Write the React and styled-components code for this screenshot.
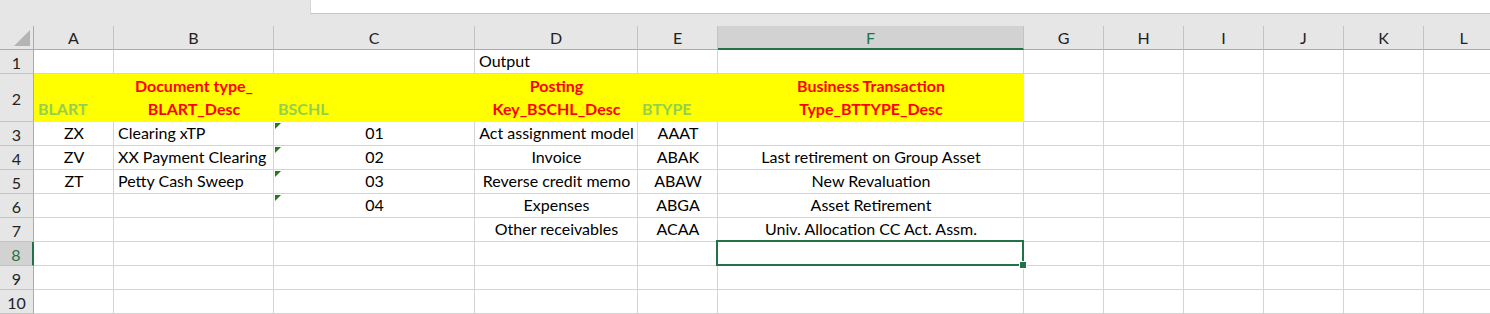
import React from "react";
import styled, { createGlobalStyle, css } from "styled-components";

//*********************************************************
// Data
//*********************************************************
const COLUMNS = [
	{ key: "A", width: 80 },
	{ key: "B", width: 160 },
	{ key: "C", width: 201 },
	{ key: "D", width: 163 },
	{ key: "E", width: 80 },
	{ key: "F", width: 306 },
	{ key: "G", width: 80 },
	{ key: "H", width: 80 },
	{ key: "I", width: 80 },
	{ key: "J", width: 80 },
	{ key: "K", width: 80 },
	{ key: "L", width: 80 }
];

const GREEN_LABEL = "#92d050";
const RED = "#ff0000";

const c = (text, opts = {}) => ({ text, ...opts });

const ROWS = [
	{ n: 1, cells: { D: c("Output", { align: "left" }) } },
	{
		n: 2,
		tall: true,
		fill: ["A", "B", "C", "D", "E", "F"],
		cells: {
			A: c("BLART", { align: "left", bold: true, color: GREEN_LABEL }),
			B: c("Document type_\nBLART_Desc", { bold: true, color: RED }),
			C: c("BSCHL", { align: "left", bold: true, color: GREEN_LABEL }),
			D: c("Posting\nKey_BSCHL_Desc", { bold: true, color: RED }),
			E: c("BTYPE", { align: "left", bold: true, color: GREEN_LABEL }),
			F: c("Business Transaction\nType_BTTYPE_Desc", { bold: true, color: RED })
		}
	},
	{
		n: 3,
		cells: {
			A: c("ZX"),
			B: c("Clearing xTP", { align: "left" }),
			C: c("01", { flag: true }),
			D: c("Act assignment model"),
			E: c("AAAT")
		}
	},
	{
		n: 4,
		cells: {
			A: c("ZV"),
			B: c("XX Payment Clearing", { align: "left" }),
			C: c("02", { flag: true }),
			D: c("Invoice"),
			E: c("ABAK"),
			F: c("Last retirement on Group Asset")
		}
	},
	{
		n: 5,
		cells: {
			A: c("ZT"),
			B: c("Petty Cash Sweep", { align: "left" }),
			C: c("03", { flag: true }),
			D: c("Reverse credit memo"),
			E: c("ABAW"),
			F: c("New Revaluation")
		}
	},
	{
		n: 6,
		cells: {
			C: c("04", { flag: true }),
			D: c("Expenses"),
			E: c("ABGA"),
			F: c("Asset Retirement")
		}
	},
	{
		n: 7,
		cells: {
			D: c("Other receivables"),
			E: c("ACAA"),
			F: c("Univ. Allocation CC Act. Assm.")
		}
	},
	{ n: 8, cells: {} },
	{ n: 9, cells: {} },
	{ n: 10, cells: {} }
];

const ACTIVE = { col: "F", row: 8 };

//*********************************************************
// Styles
//*********************************************************
const GlobalStyle = createGlobalStyle`
	html, body {
		margin: 0;
		padding: 0;
		background: #ffffff;
		overflow: hidden;
	}
	body {
		font-family: Lato, "Open Sans", sans-serif;
		font-size: 16px;
		color: #000000;
	}
`;

const Window = styled.div`
	width: 1490px;
	height: 314px;
	overflow: hidden;
	background: #ffffff;
`;

const TopBar = styled.div`
	display: flex;
	height: 26px;
	background: #e6e6e6;
	padding-left: 310px;
	box-sizing: border-box;
`;

const FormulaBox = styled.div`
	flex: 1;
	height: 14px;
	background: #ffffff;
	border-left: 1px solid #d6d6d6;
	border-bottom: 1px solid #c6c6c6;
	box-sizing: border-box;
`;

const Sheet = styled.div`
	display: grid;
	grid-template-columns: 34px ${COLUMNS.map((col) => `${col.width}px`).join(" ")};
	grid-template-rows: 24px 24px 48px repeat(8, 24px);
	width: max-content;
`;

const CornerCell = styled.div`
	position: relative;
	background: #e6e6e6;
	border-right: 1px solid #ababab;
	border-bottom: 1px solid #ababab;
	box-sizing: border-box;

	&::after {
		content: "";
		position: absolute;
		left: 14px;
		top: 4px;
		width: 0;
		height: 0;
		border-style: solid;
		border-width: 0 0 16px 16px;
		border-color: transparent transparent #b4b4b4 transparent;
	}
`;

const ColHeader = styled.div`
	display: flex;
	align-items: center;
	justify-content: center;
	background: ${(p) => (p.$active ? "#d2d2d2" : "#e6e6e6")};
	color: ${(p) => (p.$active ? "#217346" : "#222222")};
	border-right: 1px solid #c3c3c3;
	border-bottom: ${(p) => (p.$active ? "2px solid #217346" : "1px solid #ababab")};
	box-sizing: border-box;
	font-size: 16px;
	padding-top: ${(p) => (p.$active ? "1px" : "0")};
`;

const RowHeader = styled.div`
	display: flex;
	align-items: center;
	justify-content: center;
	background: ${(p) => (p.$active ? "#d2d2d2" : "#e6e6e6")};
	color: ${(p) => (p.$active ? "#217346" : "#222222")};
	border-right: ${(p) => (p.$active ? "2px solid #217346" : "1px solid #ababab")};
	border-bottom: 1px solid #c3c3c3;
	box-sizing: border-box;
	font-size: 16px;
	padding-top: 1px;
`;

const Cell = styled.div`
	position: relative;
	display: flex;
	align-items: flex-end;
	justify-content: ${(p) => (p.$align === "left" ? "flex-start" : "center")};
	text-align: ${(p) => (p.$align === "left" ? "left" : "center")};
	padding: 0 3px 1px 4px;
	box-sizing: border-box;
	border-right: 1px solid #d4d4d4;
	border-bottom: 1px solid #d4d4d4;
	line-height: 23px;
	white-space: pre;
	overflow: hidden;
	font-weight: ${(p) => (p.$bold ? 700 : 400)};
	color: ${(p) => p.$color || "#000000"};

	${(p) => p.$fill && css`
		background: #ffff00;
		border-right-color: #ffff00;
		border-bottom-color: #ffff00;
	`}

	${(p) => p.$flag && css`
		&::before {
			content: "";
			position: absolute;
			left: 1px;
			top: 1px;
			width: 0;
			height: 0;
			border-style: solid;
			border-width: 6px 6px 0 0;
			border-color: #1e7b1e transparent transparent transparent;
		}
	`}

	${(p) => p.$selected && css`
		overflow: visible;
		z-index: 2;

		&::after {
			content: "";
			position: absolute;
			left: -2px;
			top: -2px;
			right: -1px;
			bottom: -1px;
			border: 2px solid #217346;
			pointer-events: none;
		}
	`}
`;

const FillHandle = styled.span`
	position: absolute;
	right: -4px;
	bottom: -4px;
	width: 6px;
	height: 6px;
	background: #217346;
	border: 1px solid #ffffff;
	box-sizing: content-box;
	z-index: 3;
`;

//*********************************************************
// Component
//*********************************************************
const App = () => (
	<Window>
		<GlobalStyle/>
		<TopBar>
			<FormulaBox/>
		</TopBar>

		<Sheet>
			<CornerCell/>
			{COLUMNS.map((col) => (
				<ColHeader key={col.key} $active={col.key === ACTIVE.col}>
					{col.key}
				</ColHeader>
			))}

			{ROWS.map((row) => (
				<React.Fragment key={row.n}>
					<RowHeader $active={row.n === ACTIVE.row}>{row.n}</RowHeader>
					{COLUMNS.map((col) => {
						const cell = row.cells[col.key] || {};
						const selected = row.n === ACTIVE.row && col.key === ACTIVE.col;
						return (
							<Cell
								key={col.key}
								$align={cell.align}
								$bold={cell.bold}
								$color={cell.color}
								$flag={cell.flag}
								$fill={row.fill && row.fill.includes(col.key)}
								$selected={selected}
							>
								{cell.text}
								{selected && <FillHandle/>}
							</Cell>
						);
					})}
				</React.Fragment>
			))}
		</Sheet>
	</Window>
);

export default App;
